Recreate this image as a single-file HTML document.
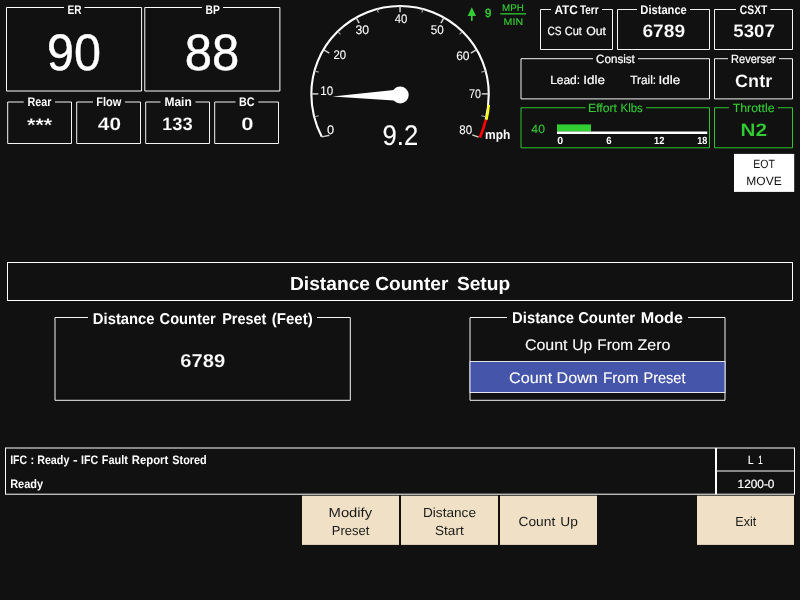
<!DOCTYPE html>
<html lang="en">
<head>
<meta charset="utf-8">
<title>Distance Counter Setup</title>
<style>
html,body{margin:0;padding:0;background:#111111;width:800px;height:600px;overflow:hidden}
svg{display:block;font-family:"Liberation Sans",sans-serif;will-change:transform}
text{white-space:pre;text-rendering:geometricPrecision}
</style>
</head>
<body>
<svg width="800" height="600" viewBox="0 0 800 600">
<rect width="800" height="600" fill="#111111"/>
<!-- brake pressures -->
<path d="M64 7.5H6.5V91H141.6V7.5H84.5" fill="none" stroke="#ffffff" stroke-width="1"/>
<text x="67.56" y="14" font-size="12.5" fill="#ffffff" textLength="14.01" lengthAdjust="spacingAndGlyphs" font-weight="bold">ER</text>
<text x="47.05" y="69.7" font-size="51.2" fill="#ffffff" textLength="53.91" lengthAdjust="spacingAndGlyphs" stroke="#ffffff" stroke-width="0.4" stroke-linejoin="round">90</text>
<path d="M202 7.5H144.8V91H279.9V7.5H223" fill="none" stroke="#ffffff" stroke-width="1"/>
<text x="205.47" y="14" font-size="12.5" fill="#ffffff" textLength="14.31" lengthAdjust="spacingAndGlyphs" font-weight="bold">BP</text>
<text x="184.76" y="69.7" font-size="51.2" fill="#ffffff" textLength="54.49" lengthAdjust="spacingAndGlyphs" stroke="#ffffff" stroke-width="0.4" stroke-linejoin="round">88</text>
<path d="M23.75 102H7.7V143.5H71.5V102H55" fill="none" stroke="#f4f4f4" stroke-width="1"/>
<text x="27.57" y="105.7" font-size="12.5" fill="#ffffff" textLength="23.96" lengthAdjust="spacingAndGlyphs" font-weight="bold">Rear</text>
<text x="26.99" y="131.2" font-size="18" fill="#ffffff" textLength="25.25" lengthAdjust="spacingAndGlyphs" font-weight="bold" stroke="#111111" stroke-width="0.15" stroke-linejoin="round">***</text>
<path d="M93 102H76.7V143.5H140.5V102H125" fill="none" stroke="#f4f4f4" stroke-width="1"/>
<text x="96.24" y="105.7" font-size="12.5" fill="#ffffff" textLength="25.09" lengthAdjust="spacingAndGlyphs" font-weight="bold">Flow</text>
<text x="97.89" y="130.4" font-size="18" fill="#ffffff" textLength="23.07" lengthAdjust="spacingAndGlyphs" font-weight="bold" stroke="#111111" stroke-width="0.15" stroke-linejoin="round">40</text>
<path d="M160.5 102H145.7V143.5H209.5V102H195.5" fill="none" stroke="#f4f4f4" stroke-width="1"/>
<text x="164.48" y="105.7" font-size="12.5" fill="#ffffff" textLength="27.27" lengthAdjust="spacingAndGlyphs" font-weight="bold">Main</text>
<text x="162.11" y="130.4" font-size="18" fill="#ffffff" textLength="30.71" lengthAdjust="spacingAndGlyphs" font-weight="bold" stroke="#111111" stroke-width="0.15" stroke-linejoin="round">133</text>
<path d="M235.5 102H214.7V143.5H278.5V102H258.3" fill="none" stroke="#f4f4f4" stroke-width="1"/>
<text x="239.06" y="105.7" font-size="12.5" fill="#ffffff" textLength="15.52" lengthAdjust="spacingAndGlyphs" font-weight="bold">BC</text>
<text x="241.3" y="130.4" font-size="18" fill="#ffffff" textLength="12.25" lengthAdjust="spacingAndGlyphs" font-weight="bold" stroke="#111111" stroke-width="0.15" stroke-linejoin="round">0</text>
<!-- speedometer -->
<path d="M321.75 136.75A93.5 93.5 0 0 1 311.35 93.9A88.7 87.9 0 0 1 488.75 93.9A110 110 0 0 1 485.69 119.65" fill="none" stroke="#fff" stroke-width="2.1"/>
<path d="M488.91 104.8A110.7 110.7 0 0 1 486.51 119.65" fill="none" stroke="#ffff00" stroke-width="2.3"/>
<path d="M485.89 119.65A110 110 0 0 1 479.85 137.6" fill="none" stroke="#ff0000" stroke-width="2.7"/>
<line x1="314.57" y1="116.81" x2="318.72" y2="115.69" stroke="#aaaaaa" stroke-width="1.1"/>
<line x1="311.55" y1="93.9" x2="318.35" y2="93.9" stroke="#d0d0d0" stroke-width="1.5"/>
<line x1="314.57" y1="70.99" x2="318.72" y2="72.11" stroke="#aaaaaa" stroke-width="1.1"/>
<line x1="323.84" y1="49.9" x2="329.3" y2="53.05" stroke="#d0d0d0" stroke-width="1.5"/>
<line x1="337.82" y1="31.67" x2="340.51" y2="34.36" stroke="#aaaaaa" stroke-width="1.1"/>
<line x1="356.05" y1="17.69" x2="359.2" y2="23.15" stroke="#d0d0d0" stroke-width="1.5"/>
<line x1="377.27" y1="8.9" x2="378.26" y2="12.57" stroke="#aaaaaa" stroke-width="1.1"/>
<line x1="400.05" y1="5.9" x2="400.05" y2="12.2" stroke="#d0d0d0" stroke-width="1.5"/>
<line x1="422.83" y1="8.9" x2="421.84" y2="12.57" stroke="#aaaaaa" stroke-width="1.1"/>
<line x1="444.05" y1="17.69" x2="440.9" y2="23.15" stroke="#d0d0d0" stroke-width="1.5"/>
<line x1="462.28" y1="31.67" x2="459.59" y2="34.36" stroke="#aaaaaa" stroke-width="1.1"/>
<line x1="476.26" y1="49.9" x2="470.8" y2="53.05" stroke="#d0d0d0" stroke-width="1.5"/>
<line x1="485.53" y1="70.99" x2="481.38" y2="72.11" stroke="#aaaaaa" stroke-width="1.1"/>
<line x1="488.55" y1="93.9" x2="481.75" y2="93.9" stroke="#d0d0d0" stroke-width="1.5"/>
<line x1="485.53" y1="116.81" x2="481.38" y2="115.69" stroke="#aaaaaa" stroke-width="1.1"/>
<line x1="321.9" y1="136.9" x2="329.5" y2="135.25" stroke="#d0d0d0" stroke-width="1.4"/>
<line x1="478.6" y1="137.1" x2="472.25" y2="134.9" stroke="#d0d0d0" stroke-width="1.4"/>
<text x="327.09" y="133.75" font-size="12.5" fill="#ffffff" textLength="7.1" lengthAdjust="spacingAndGlyphs" stroke="#ffffff" stroke-width="0.08" stroke-linejoin="round">0</text>
<text x="320.33" y="94.75" font-size="12.5" fill="#ffffff" textLength="12.87" lengthAdjust="spacingAndGlyphs" stroke="#ffffff" stroke-width="0.08" stroke-linejoin="round">10</text>
<text x="333.41" y="58.8" font-size="12.5" fill="#ffffff" textLength="12.66" lengthAdjust="spacingAndGlyphs" stroke="#ffffff" stroke-width="0.08" stroke-linejoin="round">20</text>
<text x="355.54" y="33.75" font-size="12.5" fill="#ffffff" textLength="13.65" lengthAdjust="spacingAndGlyphs" stroke="#ffffff" stroke-width="0.08" stroke-linejoin="round">30</text>
<text x="394.68" y="22.5" font-size="12.5" fill="#ffffff" textLength="12.64" lengthAdjust="spacingAndGlyphs" stroke="#ffffff" stroke-width="0.08" stroke-linejoin="round">40</text>
<text x="430.81" y="33.75" font-size="12.5" fill="#ffffff" textLength="12.98" lengthAdjust="spacingAndGlyphs" stroke="#ffffff" stroke-width="0.08" stroke-linejoin="round">50</text>
<text x="456.17" y="59.7" font-size="12.5" fill="#ffffff" textLength="13.39" lengthAdjust="spacingAndGlyphs" stroke="#ffffff" stroke-width="0.08" stroke-linejoin="round">60</text>
<text x="469.11" y="97.75" font-size="12.5" fill="#ffffff" textLength="11.94" lengthAdjust="spacingAndGlyphs" stroke="#ffffff" stroke-width="0.08" stroke-linejoin="round">70</text>
<text x="459.36" y="133.75" font-size="12.5" fill="#ffffff" textLength="12.8" lengthAdjust="spacingAndGlyphs" stroke="#ffffff" stroke-width="0.08" stroke-linejoin="round">80</text>
<polygon points="332.4,96.6 394,90.1 394,100.5" fill="#fff"/>
<circle cx="400.2" cy="95.1" r="8.5" fill="#fff"/>
<text x="382.57" y="145" font-size="28.4" fill="#ffffff" textLength="35.56" lengthAdjust="spacingAndGlyphs" stroke="#ffffff" stroke-width="0.15" stroke-linejoin="round">9.2</text>
<text x="485.05" y="138.7" font-size="13" fill="#ffffff" textLength="25.25" lengthAdjust="spacingAndGlyphs" font-weight="bold">mph</text>
<polygon points="471.8,7.3 467.6,16 476,16" fill="#32cd32"/>
<rect x="471" y="15.5" width="1.6" height="5.4" fill="#32cd32"/>
<text x="485.04" y="17" font-size="12" fill="#32cd32" textLength="6.37" lengthAdjust="spacingAndGlyphs" stroke="#32cd32" stroke-width="0.5" stroke-linejoin="round">9</text>
<text x="502.12" y="11.1" font-size="9.6" fill="#32cd32" textLength="21.67" lengthAdjust="spacingAndGlyphs" stroke="#32cd32" stroke-width="0.15" stroke-linejoin="round">MPH</text>
<line x1="500.2" y1="13.8" x2="526" y2="13.8" stroke="#2aa82a" stroke-width="1.6"/>
<text x="503.64" y="25.1" font-size="9.6" fill="#32cd32" textLength="19.44" lengthAdjust="spacingAndGlyphs" stroke="#32cd32" stroke-width="0.15" stroke-linejoin="round">MIN</text>
<!-- info panel -->
<path d="M551 9.5H540.5V49.5H612.5V9.5H602" fill="none" stroke="#f4f4f4" stroke-width="1"/>
<text x="554.41" y="13.6" font-size="12.5" fill="#ffffff" textLength="23.49" lengthAdjust="spacingAndGlyphs" font-weight="bold">ATC</text>
<text x="579.9" y="13.6" font-size="12.5" fill="#ffffff" textLength="18.77" lengthAdjust="spacingAndGlyphs" font-weight="bold">Terr</text>
<text x="547.49" y="34.6" font-size="12" fill="#ffffff" textLength="13.98" lengthAdjust="spacingAndGlyphs" stroke="#ffffff" stroke-width="0.22" stroke-linejoin="round">CS</text>
<text x="564.82" y="34.6" font-size="12" fill="#ffffff" textLength="17.07" lengthAdjust="spacingAndGlyphs" stroke="#ffffff" stroke-width="0.22" stroke-linejoin="round">Cut</text>
<text x="586.19" y="34.6" font-size="12" fill="#ffffff" textLength="19.78" lengthAdjust="spacingAndGlyphs" stroke="#ffffff" stroke-width="0.22" stroke-linejoin="round">Out</text>
<path d="M637 9.5H617.5V49.5H709.5V9.5H690" fill="none" stroke="#f4f4f4" stroke-width="1"/>
<text x="640.34" y="13.6" font-size="12.5" fill="#ffffff" textLength="46.45" lengthAdjust="spacingAndGlyphs" font-weight="bold">Distance</text>
<text x="642.45" y="37.25" font-size="18" fill="#ffffff" textLength="42.71" lengthAdjust="spacingAndGlyphs" font-weight="bold" stroke="#111111" stroke-width="0.15" stroke-linejoin="round">6789</text>
<path d="M736 9.5H714.5V49.5H792.5V9.5H770.5" fill="none" stroke="#f4f4f4" stroke-width="1"/>
<text x="739.86" y="13.6" font-size="12.5" fill="#ffffff" textLength="27.41" lengthAdjust="spacingAndGlyphs" font-weight="bold">CSXT</text>
<text x="733.26" y="37.25" font-size="18" fill="#ffffff" textLength="41.53" lengthAdjust="spacingAndGlyphs" font-weight="bold" stroke="#111111" stroke-width="0.15" stroke-linejoin="round">5307</text>
<path d="M593 58.7H521V98.9H709.5V58.7H638" fill="none" stroke="#f4f4f4" stroke-width="1"/>
<text x="596.11" y="62.5" font-size="12" fill="#ffffff" textLength="38.72" lengthAdjust="spacingAndGlyphs" stroke="#ffffff" stroke-width="0.22" stroke-linejoin="round">Consist</text>
<text x="550.15" y="83.75" font-size="12" fill="#ffffff" textLength="29.97" lengthAdjust="spacingAndGlyphs" stroke="#ffffff" stroke-width="0.22" stroke-linejoin="round">Lead:</text>
<text x="583.24" y="83.75" font-size="12" fill="#ffffff" textLength="21.67" lengthAdjust="spacingAndGlyphs" stroke="#ffffff" stroke-width="0.22" stroke-linejoin="round">Idle</text>
<text x="630.37" y="83.75" font-size="12" fill="#ffffff" textLength="25.77" lengthAdjust="spacingAndGlyphs" stroke="#ffffff" stroke-width="0.22" stroke-linejoin="round">Trail:</text>
<text x="658.57" y="83.75" font-size="12" fill="#ffffff" textLength="21.81" lengthAdjust="spacingAndGlyphs" stroke="#ffffff" stroke-width="0.22" stroke-linejoin="round">Idle</text>
<path d="M728 58.7H714.5V98.9H792.5V58.7H779" fill="none" stroke="#f4f4f4" stroke-width="1"/>
<text x="731.08" y="62.5" font-size="12" fill="#ffffff" textLength="44.72" lengthAdjust="spacingAndGlyphs" stroke="#ffffff" stroke-width="0.22" stroke-linejoin="round">Reverser</text>
<text x="735.08" y="87.25" font-size="18" fill="#ffffff" textLength="37.11" lengthAdjust="spacingAndGlyphs" font-weight="bold" stroke="#111111" stroke-width="0.15" stroke-linejoin="round">Cntr</text>
<path d="M585.5 107.75H521V147.8H709.5V107.75H646" fill="none" stroke="#30c430" stroke-width="1"/>
<text x="588" y="111.9" font-size="12" fill="#32cd32" textLength="28.9" lengthAdjust="spacingAndGlyphs" stroke="#32cd32" stroke-width="0.1" stroke-linejoin="round">Effort</text>
<text x="620.5" y="111.9" font-size="12" fill="#32cd32" textLength="22.25" lengthAdjust="spacingAndGlyphs" stroke="#32cd32" stroke-width="0.1" stroke-linejoin="round">Klbs</text>
<text x="531.39" y="132.75" font-size="12" fill="#32cd32" textLength="13.53" lengthAdjust="spacingAndGlyphs" stroke="#32cd32" stroke-width="0.1" stroke-linejoin="round">40</text>
<rect x="557" y="124.4" width="34" height="7.2" fill="#32cd32"/>
<rect x="557" y="131.5" width="150.3" height="2.5" fill="#ffffff"/>
<text x="557.16" y="144.1" font-size="10.3" fill="#ffffff" textLength="5.91" lengthAdjust="spacingAndGlyphs" font-weight="bold">0</text>
<text x="606.14" y="144.1" font-size="10.3" fill="#ffffff" textLength="5.32" lengthAdjust="spacingAndGlyphs" font-weight="bold">6</text>
<text x="653.98" y="144.1" font-size="10.3" fill="#ffffff" textLength="10.38" lengthAdjust="spacingAndGlyphs" font-weight="bold">12</text>
<text x="697.24" y="144.1" font-size="10.3" fill="#ffffff" textLength="10.11" lengthAdjust="spacingAndGlyphs" font-weight="bold">18</text>
<path d="M729 107.75H714.5V147.8H792.5V107.75H778" fill="none" stroke="#30c430" stroke-width="1"/>
<text x="732.68" y="111.9" font-size="12" fill="#32cd32" textLength="41.84" lengthAdjust="spacingAndGlyphs" stroke="#32cd32" stroke-width="0.1" stroke-linejoin="round">Throttle</text>
<text x="740.54" y="135.6" font-size="18" fill="#32cd32" textLength="26.48" lengthAdjust="spacingAndGlyphs" font-weight="bold" stroke="#111111" stroke-width="0.15" stroke-linejoin="round">N2</text>
<rect x="734" y="153.9" width="60.2" height="38" fill="#ffffff"/>
<text x="753.24" y="167.9" font-size="12" fill="#111" textLength="21.58" lengthAdjust="spacingAndGlyphs">EOT</text>
<text x="746.3" y="184.75" font-size="12" fill="#111" textLength="35.35" lengthAdjust="spacingAndGlyphs">MOVE</text>
<!-- distance counter setup -->
<rect x="7.5" y="262.5" width="785" height="38" fill="none" stroke="#fff" stroke-width="1"/>
<text x="289.98" y="289.75" font-size="18.9" fill="#ffffff" textLength="80.05" lengthAdjust="spacingAndGlyphs" font-weight="bold">Distance</text>
<text x="375.25" y="289.75" font-size="18.9" fill="#ffffff" textLength="73.16" lengthAdjust="spacingAndGlyphs" font-weight="bold">Counter</text>
<text x="456.91" y="289.75" font-size="18.9" fill="#ffffff" textLength="53.2" lengthAdjust="spacingAndGlyphs" font-weight="bold">Setup</text>
<path d="M88 317.5H55V400.3H350.3V317.5H317" fill="none" stroke="#f4f4f4" stroke-width="1"/>
<text x="92.83" y="323.7" font-size="15.6" fill="#ffffff" textLength="61.77" lengthAdjust="spacingAndGlyphs" font-weight="bold">Distance</text>
<text x="159.55" y="323.7" font-size="15.6" fill="#ffffff" textLength="56.27" lengthAdjust="spacingAndGlyphs" font-weight="bold">Counter</text>
<text x="222.17" y="323.7" font-size="15.6" fill="#ffffff" textLength="44.17" lengthAdjust="spacingAndGlyphs" font-weight="bold">Preset</text>
<text x="271.76" y="323.7" font-size="15.6" fill="#ffffff" textLength="40.95" lengthAdjust="spacingAndGlyphs" font-weight="bold">(Feet)</text>
<text x="180.28" y="367" font-size="18.5" fill="#ffffff" textLength="44.98" lengthAdjust="spacingAndGlyphs" font-weight="bold" stroke="#111111" stroke-width="0.15" stroke-linejoin="round">6789</text>
<path d="M507 317.5H470V400.3H725V317.5H688" fill="none" stroke="#f4f4f4" stroke-width="1"/>
<text x="512.11" y="322.7" font-size="15.6" fill="#ffffff" textLength="61.8" lengthAdjust="spacingAndGlyphs" font-weight="bold">Distance</text>
<text x="578.14" y="322.7" font-size="15.6" fill="#ffffff" textLength="56.98" lengthAdjust="spacingAndGlyphs" font-weight="bold">Counter</text>
<text x="640.75" y="322.7" font-size="15.6" fill="#ffffff" textLength="42.2" lengthAdjust="spacingAndGlyphs" font-weight="bold">Mode</text>
<text x="524.93" y="350.4" font-size="15.4" fill="#ffffff" textLength="42.65" lengthAdjust="spacingAndGlyphs" stroke="#ffffff" stroke-width="0.1" stroke-linejoin="round">Count</text>
<text x="572.32" y="350.4" font-size="15.4" fill="#ffffff" textLength="19.76" lengthAdjust="spacingAndGlyphs" stroke="#ffffff" stroke-width="0.1" stroke-linejoin="round">Up</text>
<text x="597.37" y="350.4" font-size="15.4" fill="#ffffff" textLength="35.8" lengthAdjust="spacingAndGlyphs" stroke="#ffffff" stroke-width="0.1" stroke-linejoin="round">From</text>
<text x="637.48" y="350.4" font-size="15.4" fill="#ffffff" textLength="32.91" lengthAdjust="spacingAndGlyphs" stroke="#ffffff" stroke-width="0.1" stroke-linejoin="round">Zero</text>
<rect x="470" y="361.5" width="255" height="31" fill="#4455aa" stroke="#e4e4ee" stroke-width="1"/>
<text x="509.09" y="382.6" font-size="15.4" fill="#ffffff" textLength="43.12" lengthAdjust="spacingAndGlyphs" stroke="#ffffff" stroke-width="0.1" stroke-linejoin="round">Count</text>
<text x="556.63" y="382.6" font-size="15.4" fill="#ffffff" textLength="41.21" lengthAdjust="spacingAndGlyphs" stroke="#ffffff" stroke-width="0.1" stroke-linejoin="round">Down</text>
<text x="602.96" y="382.6" font-size="15.4" fill="#ffffff" textLength="35.49" lengthAdjust="spacingAndGlyphs" stroke="#ffffff" stroke-width="0.1" stroke-linejoin="round">From</text>
<text x="643.46" y="382.6" font-size="15.4" fill="#ffffff" textLength="42.03" lengthAdjust="spacingAndGlyphs" stroke="#ffffff" stroke-width="0.1" stroke-linejoin="round">Preset</text>
<!-- status -->
<rect x="5.5" y="448" width="789" height="46.2" fill="none" stroke="#fff" stroke-width="1"/>
<line x1="716" y1="448" x2="716" y2="494.2" stroke="#ffffff" stroke-width="2"/>
<line x1="717" y1="471" x2="794.5" y2="471" stroke="#ffffff" stroke-width="1"/>
<text x="10.19" y="463.8" font-size="12.3" fill="#ffffff" textLength="16.97" lengthAdjust="spacingAndGlyphs" font-weight="bold">IFC</text>
<text x="30.6" y="463.8" font-size="12.3" fill="#ffffff" textLength="3.72" lengthAdjust="spacingAndGlyphs" font-weight="bold">:</text>
<text x="37.17" y="463.8" font-size="12.3" fill="#ffffff" textLength="32.2" lengthAdjust="spacingAndGlyphs" font-weight="bold">Ready</text>
<text x="73.08" y="463.8" font-size="12.3" fill="#ffffff" textLength="4.66" lengthAdjust="spacingAndGlyphs" font-weight="bold">-</text>
<text x="81.05" y="463.8" font-size="12.3" fill="#ffffff" textLength="17.22" lengthAdjust="spacingAndGlyphs" font-weight="bold">IFC</text>
<text x="101.72" y="463.8" font-size="12.3" fill="#ffffff" textLength="26.09" lengthAdjust="spacingAndGlyphs" font-weight="bold">Fault</text>
<text x="131.84" y="463.8" font-size="12.3" fill="#ffffff" textLength="36.45" lengthAdjust="spacingAndGlyphs" font-weight="bold">Report</text>
<text x="172.27" y="463.8" font-size="12.3" fill="#ffffff" textLength="34.47" lengthAdjust="spacingAndGlyphs" font-weight="bold">Stored</text>
<text x="10.14" y="487.8" font-size="12.3" fill="#ffffff" textLength="32.92" lengthAdjust="spacingAndGlyphs" font-weight="bold">Ready</text>
<text x="748.1" y="463.8" font-size="12" fill="#ffffff" textLength="5.43" lengthAdjust="spacingAndGlyphs" stroke="#ffffff" stroke-width="0.22" stroke-linejoin="round">L</text>
<text x="758.22" y="463.8" font-size="12" fill="#ffffff" textLength="4.4" lengthAdjust="spacingAndGlyphs" stroke="#ffffff" stroke-width="0.22" stroke-linejoin="round">1</text>
<text x="737.56" y="487.8" font-size="12" fill="#ffffff" textLength="36.91" lengthAdjust="spacingAndGlyphs" stroke="#ffffff" stroke-width="0.22" stroke-linejoin="round">1200-0</text>
<!-- buttons -->
<rect x="302" y="495.7" width="97" height="49.2" fill="#f0e0c5"/>
<rect x="401" y="495.7" width="97" height="49.2" fill="#f0e0c5"/>
<rect x="500" y="495.7" width="97" height="49.2" fill="#f0e0c5"/>
<rect x="697" y="495.7" width="97" height="49.2" fill="#f0e0c5"/>
<text x="328.59" y="516.7" font-size="13.2" fill="#1a1a1a" textLength="43.5" lengthAdjust="spacingAndGlyphs">Modify</text>
<text x="331.83" y="534.7" font-size="13.2" fill="#1a1a1a" textLength="37.57" lengthAdjust="spacingAndGlyphs">Preset</text>
<text x="422.95" y="516.7" font-size="13.2" fill="#1a1a1a" textLength="53.07" lengthAdjust="spacingAndGlyphs">Distance</text>
<text x="434.98" y="534.7" font-size="13.2" fill="#1a1a1a" textLength="28.75" lengthAdjust="spacingAndGlyphs">Start</text>
<text x="518.55" y="525.7" font-size="13.2" fill="#1a1a1a" textLength="36.69" lengthAdjust="spacingAndGlyphs">Count</text>
<text x="560.38" y="525.7" font-size="13.2" fill="#1a1a1a" textLength="17.57" lengthAdjust="spacingAndGlyphs">Up</text>
<text x="735.28" y="525.8" font-size="13.2" fill="#1a1a1a" textLength="20.99" lengthAdjust="spacingAndGlyphs">Exit</text>
</svg>
</body>
</html>
